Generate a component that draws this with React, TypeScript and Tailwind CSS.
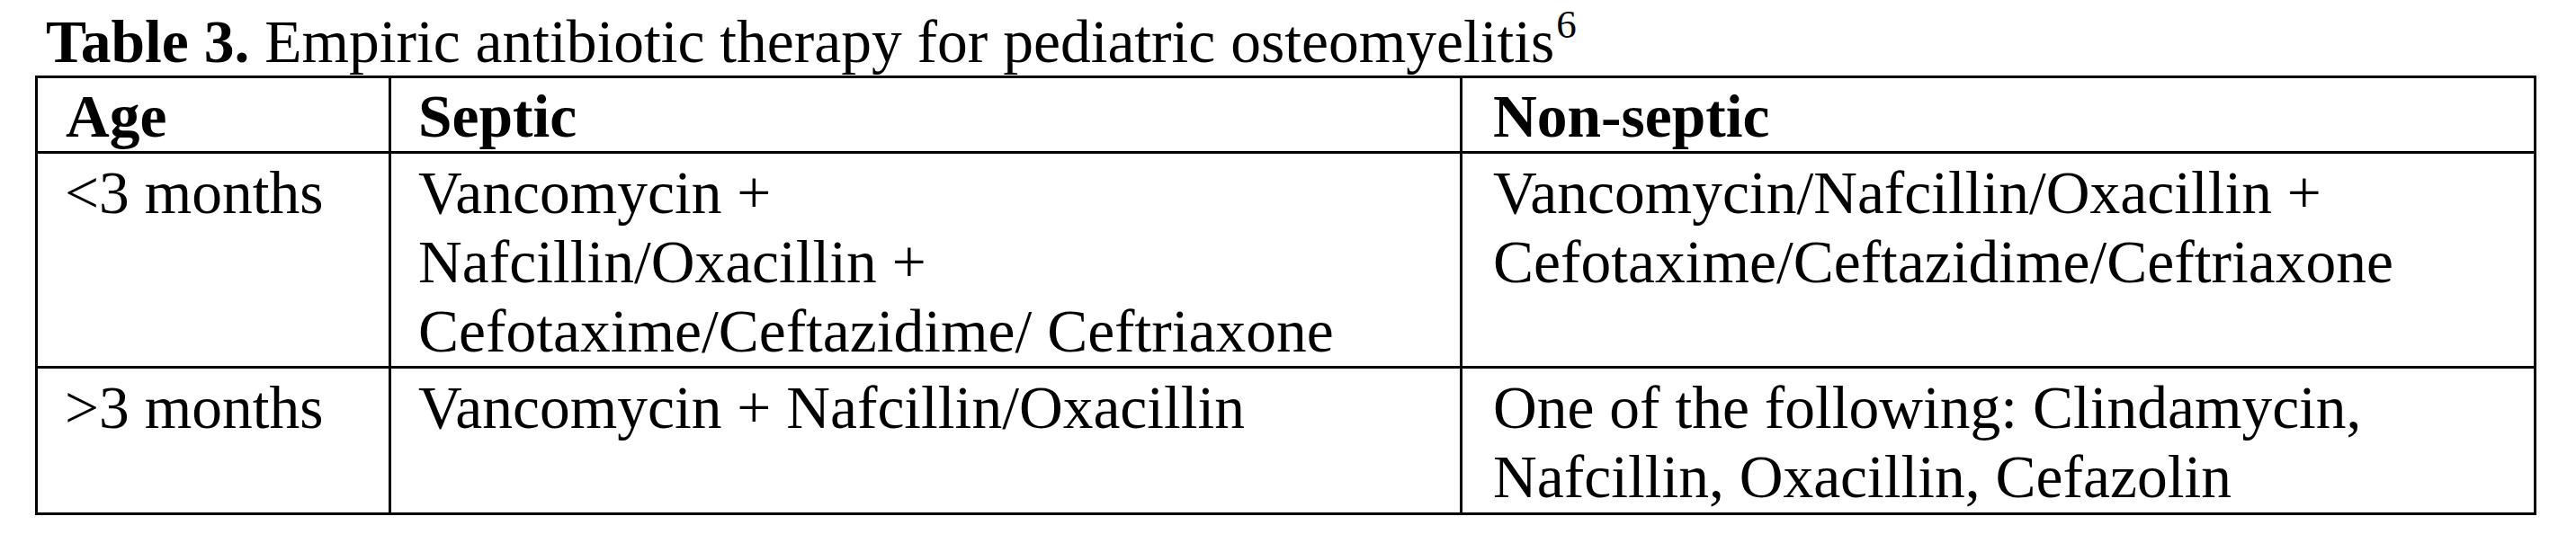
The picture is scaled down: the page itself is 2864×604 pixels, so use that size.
import React from 'react';

// Empiric antibiotic therapy table, laid out as a 3-column grid with ruled cells
const rows = [
  {
    age: '<3 months',
    septic: ['Vancomycin +', 'Nafcillin/Oxacillin +', 'Cefotaxime/Ceftazidime/ Ceftriaxone'],
    nonSeptic: ['Vancomycin/Nafcillin/Oxacillin +', 'Cefotaxime/Ceftazidime/Ceftriaxone'],
  },
  {
    age: '>3 months',
    septic: ['Vancomycin + Nafcillin/Oxacillin'],
    nonSeptic: ['One of the following: Clindamycin,', 'Nafcillin, Oxacillin, Cefazolin'],
  },
];

const Lines: React.FC<{ lines: string[] }> = ({ lines }) => (
  <>
    {lines.map((line, i) => (
      <div key={i} className="whitespace-nowrap">{line}</div>
    ))}
  </>
);

const App: React.FC = () => {
  return (
    <div className="min-h-screen bg-white pl-[39px] font-['Liberation_Serif','Times_New_Roman',serif] text-black">
      <div className="pl-[12px] pt-[10px] text-[67.5px] leading-[74px] whitespace-nowrap">
        <span className="font-bold">Table 3.</span> Empiric antibiotic therapy for pediatric osteomyelitis
        <sup className="top-[-27px] pl-[2px] text-[45px]">6</sup>
      </div>

      <div className="grid w-[2781px] grid-cols-[393px_1191px_1191px] border-[3px] border-black text-[67.5px] leading-[77px]">
        {/* header */}
        <div className="border-b-[3px] border-r-[3px] border-black pl-[31px] pt-[4px] font-bold">Age</div>
        <div className="border-b-[3px] border-r-[3px] border-black pl-[30px] pt-[4px] font-bold">Septic</div>
        <div className="border-b-[3px] border-black pl-[34px] pt-[4px] font-bold">Non-septic</div>

        {rows.map((row, index) => {
          const last = index === rows.length - 1;
          return (
            <React.Fragment key={row.age}>
              <div className={last ? 'border-r-[3px] border-black pl-[30px] pt-[5px] pb-[1px]' : 'border-b-[3px] border-r-[3px] border-black pl-[30px] pt-[5px]'}>
                {row.age}
              </div>
              <div className={last ? 'border-r-[3px] border-black pl-[30px] pt-[5px] pb-[1px]' : 'border-b-[3px] border-r-[3px] border-black pl-[30px] pt-[5px]'}>
                <Lines lines={row.septic} />
              </div>
              <div className={last ? 'pl-[34px] pt-[5px] pb-[1px]' : 'border-b-[3px] border-black pl-[34px] pt-[5px]'}>
                <Lines lines={row.nonSeptic} />
              </div>
            </React.Fragment>
          );
        })}
      </div>
    </div>
  );
};

export default App;
